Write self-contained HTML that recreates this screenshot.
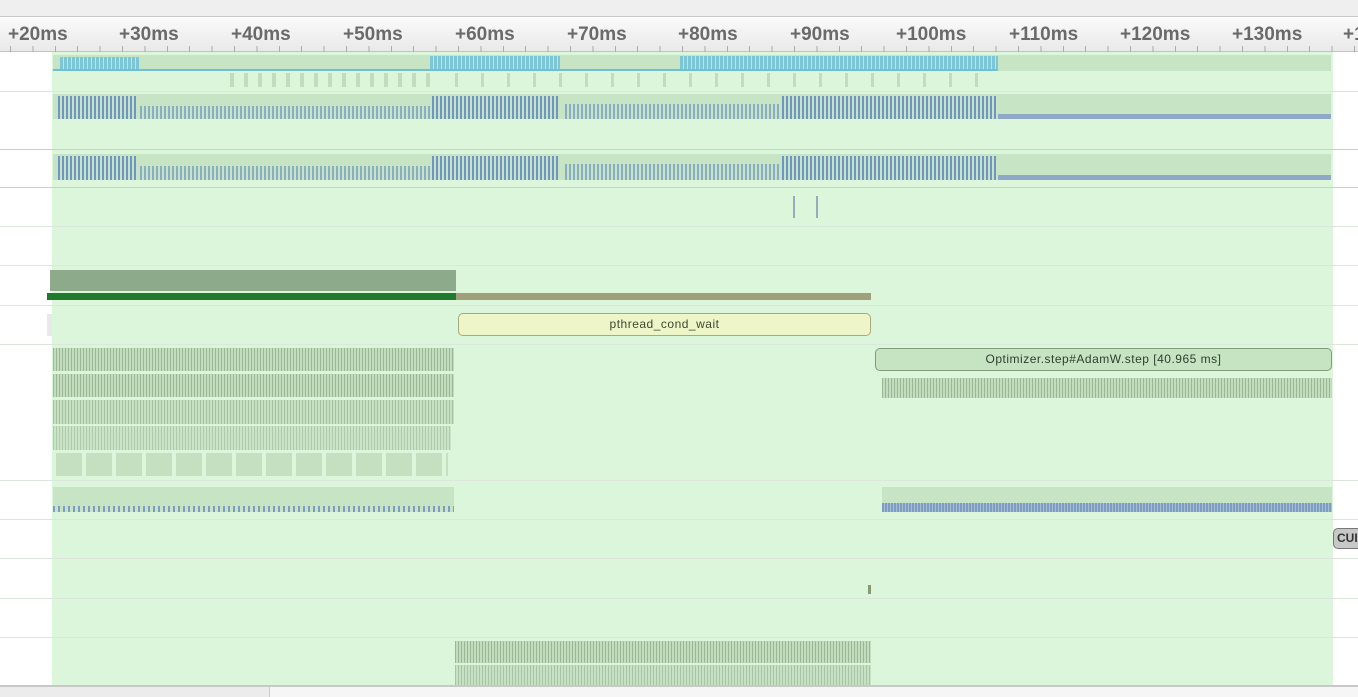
<!DOCTYPE html>
<html><head><style>
body{margin:0;width:1358px;height:697px;overflow:hidden;background:#fff;font-family:"Liberation Sans",sans-serif;position:relative}
div{position:absolute;box-sizing:border-box}
.lbl{top:24px;font-size:19px;color:#6a6a6a;font-weight:bold;white-space:nowrap}
.ln{left:0;width:1358px;height:1px;background:#dde6dd}
.gb{background:#c7e5c5}
.bars{background:repeating-linear-gradient(90deg,#9ab896 0 1px,#c2dcbe 1px 3px)}
.bb{background:repeating-linear-gradient(90deg,#6e95c4 0 2px,#c7e5c5 2px 4px)}
.cy{background:repeating-linear-gradient(90deg,#7cc6d6 0 3px,#c7e5c5 3px 4px)}
</style></head><body>
<div style="left:0;top:0;width:1358px;height:17px;background:#efefef;border-bottom:1px solid #c8c8c8"></div>
<div style="left:0;top:18px;width:1358px;height:34px;background:linear-gradient(#fafafa,#e9e9e9);border-bottom:1px solid #c4c4c4"></div>
<div style="left:0;top:46px;width:1358px;height:6px;background:repeating-linear-gradient(90deg,transparent 0 10px,#aaa 10px 11px,transparent 11px 22.4px)"></div>
<div class="lbl" style="left:8px">+20ms</div>
<div class="lbl" style="left:119px">+30ms</div>
<div class="lbl" style="left:231px">+40ms</div>
<div class="lbl" style="left:343px">+50ms</div>
<div class="lbl" style="left:455px">+60ms</div>
<div class="lbl" style="left:567px">+70ms</div>
<div class="lbl" style="left:678px">+80ms</div>
<div class="lbl" style="left:790px">+90ms</div>
<div class="lbl" style="left:896px">+100ms</div>
<div class="lbl" style="left:1009px">+110ms</div>
<div class="lbl" style="left:1120px">+120ms</div>
<div class="lbl" style="left:1232px">+130ms</div>
<div class="lbl" style="left:1343px">+1</div>
<div style="left:52px;top:52px;width:1281px;height:633px;background:#dcf6dc"></div>
<div class="ln" style="top:91px"></div><div class="ln" style="top:149px;background:#c4d0dc"></div><div class="ln" style="top:187px;background:#c4d0dc"></div>
<div class="ln" style="top:226px"></div><div class="ln" style="top:265px"></div><div class="ln" style="top:305px"></div><div class="ln" style="top:344px"></div>
<div class="ln" style="top:480px"></div><div class="ln" style="top:519px"></div><div class="ln" style="top:558px"></div><div class="ln" style="top:598px"></div><div class="ln" style="top:637px"></div>
<div class="gb" style="left:53px;top:55px;width:945px;height:16px"></div>
<div class="cy" style="left:60px;top:57px;width:80px;height:14px"></div>
<div class="cy" style="left:430px;top:56px;width:130px;height:15px"></div>
<div class="cy" style="left:680px;top:56px;width:318px;height:15px"></div>
<div style="left:53px;top:69px;width:1278px;height:2px;background:#6fc0d6"></div>
<div class="gb" style="left:998px;top:55px;width:333px;height:16px"></div>
<div style="left:230px;top:73px;width:200px;height:14px;background:repeating-linear-gradient(90deg,#c2dcc0 0 4px,transparent 4px 14px)"></div>
<div style="left:455px;top:73px;width:540px;height:14px;background:repeating-linear-gradient(90deg,#c2dcc0 0 3px,transparent 3px 26px)"></div>
<div class="gb" style="left:53px;top:94px;width:1278px;height:25px"></div>
<div class="bb" style="left:58px;top:96px;width:80px;height:23px"></div>
<div class="bb" style="left:140px;top:106px;width:290px;height:13px;opacity:.7"></div>
<div class="bb" style="left:432px;top:96px;width:128px;height:23px"></div>
<div class="bb" style="left:565px;top:104px;width:215px;height:15px;opacity:.7"></div>
<div class="bb" style="left:782px;top:96px;width:214px;height:23px"></div>
<div style="left:998px;top:114px;width:333px;height:5px;background:#8fa8c8"></div>
<div class="gb" style="left:53px;top:154px;width:1278px;height:26px"></div>
<div class="bb" style="left:58px;top:156px;width:80px;height:24px"></div>
<div class="bb" style="left:140px;top:166px;width:290px;height:14px;opacity:.7"></div>
<div class="bb" style="left:432px;top:156px;width:128px;height:24px"></div>
<div class="bb" style="left:565px;top:164px;width:215px;height:16px;opacity:.7"></div>
<div class="bb" style="left:782px;top:156px;width:214px;height:24px"></div>
<div style="left:998px;top:175px;width:333px;height:5px;background:#8fa8c8"></div>
<div style="left:793px;top:196px;width:2px;height:22px;background:#9ab"></div>
<div style="left:816px;top:196px;width:2px;height:22px;background:#9ab"></div>
<div style="left:50px;top:270px;width:406px;height:21px;background:#8daa8b"></div>
<div style="left:47px;top:293px;width:409px;height:7px;background:#1f7a2e"></div>
<div style="left:456px;top:293px;width:415px;height:7px;background:#a0a07c"></div>
<div style="left:458px;top:313px;width:413px;height:23px;background:#eef5c8;border:1px solid #a8aa78;border-radius:5px;font-size:12px;color:#3a4a30;text-align:center;line-height:21px;letter-spacing:.5px">pthread_cond_wait</div>
<div style="left:47px;top:314px;width:5px;height:22px;background:#e8e8e8"></div>
<div class="bars" style="left:53px;top:348px;width:401px;height:23px"></div>
<div class="bars" style="left:53px;top:374px;width:401px;height:23px"></div>
<div class="bars" style="left:53px;top:400px;width:401px;height:24px;opacity:.85"></div>
<div class="bars" style="left:53px;top:426px;width:398px;height:24px;opacity:.7"></div>
<div style="left:56px;top:453px;width:392px;height:23px;background:repeating-linear-gradient(90deg,#c4e0c0 0 26px,transparent 26px 30px)"></div>
<div style="left:875px;top:348px;width:457px;height:23px;background:#c6e3c2;border:1px solid #7f9c7c;border-radius:5px;font-size:12px;color:#2f3f2f;text-align:center;line-height:21px;letter-spacing:.5px">Optimizer.step#AdamW.step [40.965 ms]</div>
<div class="bars" style="left:882px;top:378px;width:450px;height:20px"></div>
<div class="gb" style="left:53px;top:487px;width:401px;height:25px"></div>
<div style="left:53px;top:506px;width:401px;height:6px;background:repeating-linear-gradient(90deg,#7d9dc4 0 2px,#c7e5c5 2px 5px)"></div>
<div class="gb" style="left:882px;top:487px;width:450px;height:25px"></div>
<div style="left:882px;top:503px;width:450px;height:9px;background:repeating-linear-gradient(90deg,#7d9dc4 0 2px,#a8c0d0 2px 3px)"></div>
<div style="left:1333px;top:528px;width:30px;height:21px;background:#c8c8c8;border:1px solid #777;border-radius:5px;font-size:12px;font-weight:bold;color:#333;line-height:19px;padding-left:3px">CUI</div>
<div style="left:868px;top:585px;width:3px;height:9px;background:#8a9a70"></div>
<div class="bars" style="left:455px;top:641px;width:416px;height:22px"></div>
<div class="bars" style="left:455px;top:665px;width:416px;height:20px;opacity:.8"></div>
<div style="left:0;top:685px;width:1358px;height:12px;background:#f6f6f6;border-top:2px solid #c8c8c8"></div>
<div style="left:0;top:687px;width:270px;height:10px;background:#ececec;border-right:1px solid #ccc"></div>
</body></html>
